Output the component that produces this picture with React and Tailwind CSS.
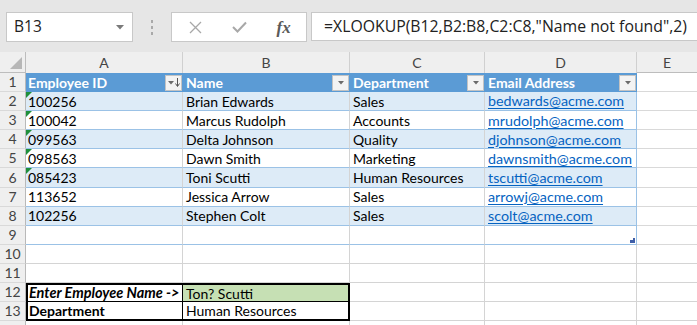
import React from 'react';

const people = [
    ['100256', 'Brian Edwards', 'Sales', 'bedwards@acme.com', true],
    ['100042', 'Marcus Rudolph', 'Accounts', 'mrudolph@acme.com', true],
    ['099563', 'Delta Johnson', 'Quality', 'djohnson@acme.com', true],
    ['098563', 'Dawn Smith', 'Marketing', 'dawnsmith@acme.com', true],
    ['085423', 'Toni Scutti', 'Human Resources', 'tscutti@acme.com', true],
    ['113652', 'Jessica Arrow', 'Sales', 'arrowj@acme.com', false],
    ['102256', 'Stephen Colt', 'Sales', 'scolt@acme.com', false],
];

function RowNum({ n }) {
    return (
        <div className="w-[26px] shrink-0 h-full bg-[#efefef] border-r border-b border-r-[#b9b9b9] border-b-[#d9d9d9] flex items-center justify-center text-[#444] text-[14px] leading-none">
            {n}
        </div>
    );
}

function FilterButton({ sorted }) {
    return (
        <div className="w-[17px] h-[16px] mr-[1px] shrink-0 bg-[#f3f3f3] border border-[#c3c3c3] flex items-center justify-center gap-[1px]">
            <svg width="6" height="4" viewBox="0 0 6 4">
                <path d="M0 0 H6 L3 3.5 Z" fill="#6b6b6b" />
            </svg>
            {sorted && (
                <svg width="5" height="9" viewBox="0 0 5 9">
                    <path d="M2.5 0 V8" stroke="#555" strokeWidth="1" />
                    <path d="M0.5 5.5 L2.5 8.5 L4.5 5.5" stroke="#555" strokeWidth="1" fill="none" />
                </svg>
            )}
        </div>
    );
}

function GreenFlag() {
    return (
        <svg className="absolute top-0 left-0" width="6" height="6" viewBox="0 0 6 6">
            <path d="M0 0 H6 L0 6 Z" fill="#1f8f3a" />
        </svg>
    );
}

export default function App() {
    return (
        <div className="w-[697px] h-[325px] overflow-hidden bg-white font-['Lato',sans-serif] text-[14px] text-black">
            {/* Formula bar */}
            <div className="h-[52px] bg-[#e6e6e6] flex items-start pt-[12px]">
                <div className="ml-[6px] w-[127px] h-[30px] bg-white border border-[#c8c8c8] flex items-center justify-between pl-[7px] pr-[8px]">
                    <span className="font-['Open_Sans',sans-serif] text-[15.5px] text-[#222]">B13</span>
                    <svg width="8" height="5" viewBox="0 0 8 5">
                        <path d="M0 0 H8 L4 4.5 Z" fill="#7a7a7a" />
                    </svg>
                </div>
                <div className="w-[38px] h-[30px] flex flex-col items-center justify-center gap-[3px]">
                    <div className="w-[2px] h-[3px] bg-[#a9a9a9]" />
                    <div className="w-[2px] h-[3px] bg-[#a9a9a9]" />
                    <div className="w-[2px] h-[3px] bg-[#a9a9a9]" />
                </div>
                <div className="w-[136px] h-[30px] bg-white border border-[#c8c8c8] flex items-center">
                    <div className="w-[45px] flex justify-center pl-[2px]">
                        <svg width="13" height="13" viewBox="0 0 13 13">
                            <path d="M1 1 L12 12 M12 1 L1 12" stroke="#a8a8a8" strokeWidth="1.3" />
                        </svg>
                    </div>
                    <div className="w-[45px] flex justify-center">
                        <svg width="15" height="12" viewBox="0 0 15 12">
                            <path d="M1 6 L5.5 10.5 L14 1.5" stroke="#a8a8a8" strokeWidth="2" fill="none" />
                        </svg>
                    </div>
                    <div className="w-[45px] flex justify-center">
                        <span className="font-['Liberation_Serif',serif] italic font-bold text-[17px] text-[#5a5a5a] leading-none">fx</span>
                    </div>
                </div>
                <div className="ml-[4px] flex-1 h-[29px] bg-white border-y border-l border-[#c8c8c8] flex items-center pl-[12px]">
                    <span className="font-['Open_Sans',sans-serif] text-[15.8px] text-[#222] whitespace-nowrap">
                        =XLOOKUP(B12,B2:B8,C2:C8,"Name not found",2)
                    </span>
                </div>
            </div>

            {/* Column headers */}
            <div className="flex h-[21px] bg-[#efefef] text-[#444]">
                <div className="w-[26px] shrink-0 h-full border-r border-b border-[#bdbdbd] flex items-end justify-end pr-[3px] pb-[3px]">
                    <svg width="12" height="12" viewBox="0 0 12 12">
                        <path d="M12 0 V12 H0 Z" fill="#b7b7b7" />
                    </svg>
                </div>
                <div className="w-[157px] shrink-0 border-r border-[#d0d0d0] flex items-center justify-center">A</div>
                <div className="w-[167px] shrink-0 border-r border-[#d0d0d0] flex items-center justify-center">B</div>
                <div className="w-[135px] shrink-0 border-r border-[#d0d0d0] flex items-center justify-center">C</div>
                <div className="w-[152px] shrink-0 border-r border-[#d0d0d0] flex items-center justify-center">D</div>
                <div className="flex-1 border-b border-[#bdbdbd] flex items-center justify-center">E</div>
            </div>

            {/* Row 1: table header */}
            <div className="flex h-[19.1px]">
                <RowNum n={1} />
                <div className="w-[157px] shrink-0 bg-[#5b9bd5] text-white font-bold flex items-center justify-between pl-[2px]">
                    <span>Employee ID</span>
                    <FilterButton sorted />
                </div>
                <div className="w-[167px] shrink-0 bg-[#5b9bd5] text-white font-bold flex items-center justify-between pl-[3px]">
                    <span>Name</span>
                    <FilterButton />
                </div>
                <div className="w-[135px] shrink-0 bg-[#5b9bd5] text-white font-bold flex items-center justify-between pl-[3px]">
                    <span>Department</span>
                    <FilterButton />
                </div>
                <div className="w-[152px] shrink-0 bg-[#5b9bd5] text-white font-bold flex items-center justify-between pl-[3px]">
                    <span>Email Address</span>
                    <FilterButton />
                </div>
                <div className="flex-1 border-b border-[#d9d9d9]" />
            </div>

            {/* Rows 2-8: data */}
            {people.map(([id, name, dept, email, flag], i) => {
                const band = i % 2 === 0 ? 'bg-[#ddebf7]' : 'bg-white';
                return (
                    <div key={id} className="flex h-[19.1px]">
                        <RowNum n={i + 2} />
                        <div className={`relative w-[157px] shrink-0 ${band} border-r border-b border-r-[#d4d4d4] border-b-[#9bc2e6] flex items-center pl-[2px]`}>
                            {flag && <GreenFlag />}
                            {id}
                        </div>
                        <div className={`w-[167px] shrink-0 ${band} border-r border-b border-r-[#d4d4d4] border-b-[#9bc2e6] flex items-center pl-[3px]`}>
                            {name}
                        </div>
                        <div className={`w-[135px] shrink-0 ${band} border-r border-b border-r-[#d4d4d4] border-b-[#9bc2e6] flex items-center pl-[3px]`}>
                            {dept}
                        </div>
                        <div className={`w-[152px] shrink-0 ${band} border-r border-b border-r-[#9bc2e6] border-b-[#9bc2e6] flex items-center pl-[3px] whitespace-nowrap`}>
                            <span className="text-[#0563c1] text-[14.3px] underline underline-offset-[2px]">{email}</span>
                        </div>
                        <div className="flex-1 border-b border-[#d9d9d9]" />
                    </div>
                );
            })}

            {/* Row 9: empty table row */}
            <div className="flex h-[19.1px]">
                <RowNum n={9} />
                <div className="w-[157px] shrink-0 border-r border-b border-r-[#d4d4d4] border-b-[#9bc2e6]" />
                <div className="w-[167px] shrink-0 border-r border-b border-r-[#d4d4d4] border-b-[#9bc2e6]" />
                <div className="w-[135px] shrink-0 border-r border-b border-r-[#d4d4d4] border-b-[#9bc2e6]" />
                <div className="relative w-[152px] shrink-0 border-r border-b border-r-[#9bc2e6] border-b-[#9bc2e6]">
                    <svg className="absolute right-[1px] bottom-[1px]" width="5" height="5" viewBox="0 0 5 5">
                        <path d="M5 0 V5 H0 V2 H3 V0 Z" fill="#3f5fa8" />
                    </svg>
                </div>
                <div className="flex-1 border-b border-[#d9d9d9]" />
            </div>

            {/* Rows 10-11: blank */}
            {[10, 11].map((n) => (
                <div key={n} className="flex h-[19.1px]">
                    <RowNum n={n} />
                    <div className="w-[157px] shrink-0 border-r border-b border-[#d4d4d4]" />
                    <div className="w-[167px] shrink-0 border-r border-b border-[#d4d4d4]" />
                    <div className="w-[135px] shrink-0 border-r border-b border-[#d4d4d4]" />
                    <div className="w-[152px] shrink-0 border-r border-b border-[#d4d4d4]" />
                    <div className="flex-1 border-b border-[#d4d4d4]" />
                </div>
            ))}

            {/* Row 12: lookup input */}
            <div className="flex h-[19.1px]">
                <RowNum n={12} />
                <div className="w-[157px] shrink-0 border-l-2 border-t-2 border-r border-b border-black flex items-center pl-[1px] font-bold italic whitespace-nowrap text-[14.5px]">
                    Enter Employee Name -&gt;
                </div>
                <div className="w-[167px] shrink-0 bg-[#c6e0b4] border-t-2 border-r-2 border-b border-black flex items-center pl-[3px]">
                    Ton? Scutti
                </div>
                <div className="w-[135px] shrink-0 border-r border-b border-[#d4d4d4]" />
                <div className="w-[152px] shrink-0 border-r border-b border-[#d4d4d4]" />
                <div className="flex-1 border-b border-[#d4d4d4]" />
            </div>

            {/* Row 13: result */}
            <div className="flex h-[19.1px]">
                <RowNum n={13} />
                <div className="w-[157px] shrink-0 border-l-2 border-b-2 border-r border-black flex items-center pl-[1px] font-bold">
                    Department
                </div>
                <div className="w-[167px] shrink-0 border-r-2 border-b-2 border-black flex items-center pl-[3px]">
                    Human Resources
                </div>
                <div className="w-[135px] shrink-0 border-r border-b border-[#d4d4d4]" />
                <div className="w-[152px] shrink-0 border-r border-b border-[#d4d4d4]" />
                <div className="flex-1 border-b border-[#d4d4d4]" />
            </div>

            {/* Row 14 (only the top edge shows) */}
            <div className="flex h-[19px]">
                <RowNum n="" />
                <div className="w-[157px] shrink-0 border-r border-[#d4d4d4]" />
                <div className="w-[167px] shrink-0 border-r border-[#d4d4d4]" />
                <div className="w-[135px] shrink-0 border-r border-[#d4d4d4]" />
                <div className="w-[152px] shrink-0 border-r border-[#d4d4d4]" />
            </div>
        </div>
    );
}
